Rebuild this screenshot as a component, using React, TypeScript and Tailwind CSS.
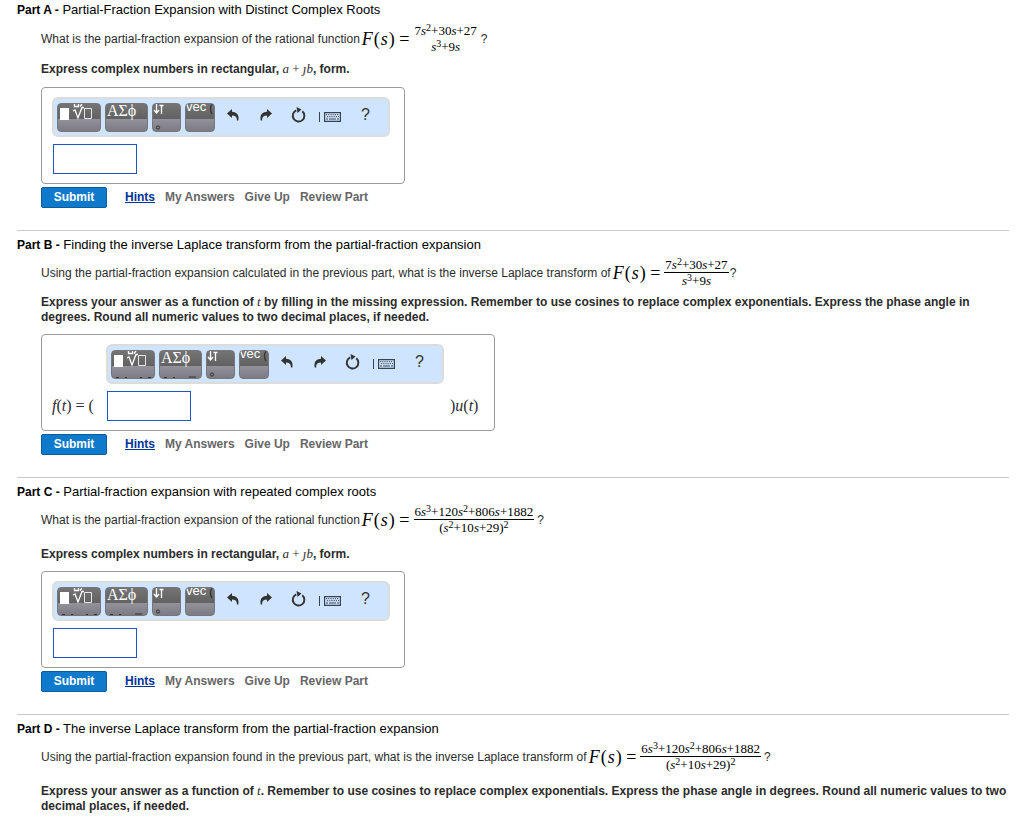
import type { ReactNode } from "react";

const SERIF = "font-['Liberation_Serif',serif]";

function Term({ children }: { children: ReactNode }) {
  return <span className="font-['Liberation_Serif',serif] text-[13px] leading-none font-normal">{children}</span>;
}

function Sup({ children }: { children: ReactNode }) {
  return <sup className="relative -top-1 align-baseline text-[10px] leading-none">{children}</sup>;
}

function Formula({ top, bottom, bar = true }: { top: ReactNode; bottom: ReactNode; bar?: boolean }) {
  return (
    <span className={`${SERIF} ml-[2px] inline-flex items-center text-black`}>
      <span className="text-[18px] leading-6">
        <i className="pr-px">F</i>(<i className="px-px">s</i>) =
      </span>
      <span className="ml-1 inline-flex flex-col items-stretch text-center text-[13px]">
        <span className={bar ? "border-b border-black px-px leading-[14px]" : "border-b border-transparent px-px leading-[14px]"}>{top}</span>
        <span className="leading-[15px]">{bottom}</span>
      </span>
    </span>
  );
}

const cubicTop = (
  <>
    6<i>s</i><Sup>3</Sup>+120<i>s</i><Sup>2</Sup>+806<i>s</i>+1882
  </>
);
const cubicBottom = (
  <>
    (<i>s</i><Sup>2</Sup>+10<i>s</i>+29)<Sup>2</Sup>
  </>
);
const quadTop = (
  <>
    7<i>s</i><Sup>2</Sup>+30<i>s</i>+27
  </>
);
const quadBottom = (
  <>
    <i>s</i><Sup>3</Sup>+9<i>s</i>
  </>
);

const KEY =
  "relative flex h-[29px] shrink-0 flex-col items-start justify-start overflow-hidden rounded-[4px] border border-[#77777b] bg-[linear-gradient(#747474,#626262_54%,#94929a_55%,#7c7a82)] text-left text-white";
const TOOL = "flex h-6 w-[33px] items-center justify-center text-[#333]";

function Toolbar({ marks }: { marks?: boolean }) {
  return (
    <div className="flex h-10 w-[338px] items-start rounded-md border-2 border-[#dcdcdc] bg-[#cfe5ff] pt-1 pl-[3px]">
      <div className="flex gap-1">
        <button type="button" aria-label="Templates" className={`${KEY} w-[44px]`}>
          <svg className="block" width="42" height="27" viewBox="0 0 42 27" fill="none">
            <path d="M2 4h9v12H2z" fill="#fff" />
            <path d="M16.500 0v2.500h4V0M22 2.500l2-2.500M15 7l2-1 3 8L24 3.500h2" stroke="#fff" strokeWidth="1.300" />
            <path d="M26.500 4.500h7v10h-7z" stroke="#e6e6e6" />
            {marks && <path d="M4 26.500h3M13 26.500h2M28 26.500h2M36 26.500h3" stroke="#333" />}
          </svg>
        </button>
        <button type="button" aria-label="Greek symbols" className={`${KEY} w-[43px]`}>
          <span className={`${SERIF} -mt-px block pl-px text-[16px] leading-[15px]`}>ΑΣϕ</span>
          {marks && (
            <svg className="block" width="41" height="13" viewBox="0 0 41 13">
              <path d="M4 12.500h3M13 12.500h2M29 12h7" stroke="#333" />
            </svg>
          )}
        </button>
        <button type="button" aria-label="Arrows and operators" className={`${KEY} w-[29px]`}>
          <svg className="block" width="27" height="27" viewBox="0 0 27 27" fill="none">
            <path d="M3.500 0v8.500M1 6l2.500 3 2.500-3M8.500 10V1M6.500 1.500h4" stroke="#fff" strokeWidth="1.300" />
            <circle cx="5" cy="23.500" r="1.600" stroke="#333" />
          </svg>
        </button>
        <button type="button" aria-label="Vectors" className={`${KEY} w-[30px]`}>
          <span className="-mt-1 block text-[13px] leading-[14px]">vec</span>
          <svg className="absolute top-0 right-0" width="6" height="27" viewBox="0 0 6 27" fill="none">
            <path d="M4 0q-3 5 0 10" stroke="#333" strokeWidth="1.300" />
          </svg>
        </button>
      </div>
      <div className="ml-px flex flex-1 items-start">
        <button type="button" aria-label="Undo" className={TOOL}>
          <svg width="12" height="12" viewBox="0 0 12 12" fill="currentColor">
            <path d="M0 4.500 5 0v2.700c4.500.1 7.500 3 6.300 8.800h-1.500c.5-3-1.300-5-4.800-5v2.500z" />
          </svg>
        </button>
        <button type="button" aria-label="Redo" className={TOOL}>
          <svg width="12" height="12" viewBox="0 0 12 12" fill="currentColor">
            <path d="M12 4.500 7 0v2.700C2.500 2.800-.5 5.700.7 11.500h1.500c-.5-3 1.300-5 4.800-5v2.500z" />
          </svg>
        </button>
        <button type="button" aria-label="Reset" className={TOOL}>
          <svg width="15" height="16" viewBox="0 0 15 16" fill="none">
            <path d="M11.300 4.300a5.800 5.800 0 1 1-6-.9" stroke="currentColor" strokeWidth="1.900" />
            <path d="M5.500 0 10.500 2.500 6.500 6z" fill="currentColor" />
          </svg>
        </button>
        <button type="button" aria-label="Keyboard shortcuts" className="flex h-6 w-7 items-center justify-center pt-1 text-[#37424f]">
          <svg width="23" height="12" viewBox="0 0 23 12" fill="none">
            <path d="M1.500 1v10" stroke="currentColor" />
            <path d="M6.600 1.600h15.800v8.800H6.600z" stroke="currentColor" strokeWidth="1.200" />
            <path d="M8 3.700h13M9 5.700h12" stroke="currentColor" strokeDasharray="1.200 1" />
            <path d="M8 8h2M11 8h7M19 8h2" stroke="currentColor" />
          </svg>
        </button>
        <button type="button" aria-label="Help" className="flex h-6 flex-1 items-center justify-center text-[16px] text-[#333]">
          ?
        </button>
      </div>
    </div>
  );
}

function Answer({ label }: { label: string }) {
  return <input type="text" aria-label={label} className="block h-[30px] w-[84px] border border-[#1f56c4] bg-white px-1 outline-none" />;
}

function Box({ children }: { children: ReactNode }) {
  return <div className="w-fit rounded border border-[#9b9b9b] py-[9px] pr-[14px] pl-[10px]">{children}</div>;
}

function Actions() {
  const link = "text-[#666]";
  return (
    <div className="mt-[3px] flex items-center gap-[10px] text-[12px] leading-[21px] font-bold">
      <button type="button" className="mr-2 h-[21px] w-[66px] rounded-[2px] border border-[#0b5c9c] bg-[#0f7acb] leading-[19px] text-white">
        Submit
      </button>
      <a href="#hints" className="text-[#003399] underline">Hints</a>
      <a href="#answers" className={link}>My Answers</a>
      <a href="#give-up" className={link}>Give Up</a>
      <a href="#review" className={link}>Review Part</a>
    </div>
  );
}

function Part({ name, title, first, children }: { name: string; title: string; first?: boolean; children: ReactNode }) {
  return (
    <section className={first ? "" : "mt-[22px] border-t border-[#c8c8c8] pt-1"}>
      <h2 className="text-[13px] leading-5 text-black">
        <b className="text-[12px]">{name} -</b> {title}
      </h2>
      <div className="pl-6">{children}</div>
    </section>
  );
}

const Q = "flex h-9 items-center text-[12px] whitespace-nowrap";
const I = "text-[12px] leading-[15px] font-bold";

export default function App() {
  return (
    <main className="overflow-hidden bg-white pr-[15px] pl-[17px] font-['Liberation_Sans',Arial,sans-serif] text-[#2b2b2b]">
      <Part name="Part A" title="Partial-Fraction Expansion with Distinct Complex Roots" first>
        <p className={`${Q} mt-px`}>
          What is the partial-fraction expansion of the rational function
          <Formula top={quadTop} bottom={quadBottom} bar={false} />
          <span className="ml-[3px]">?</span>
        </p>
        <p className={`${I} mt-[5px] mb-[10px]`}>
          Express complex numbers in rectangular, <Term><i>a</i> + <i>ȷb</i></Term>, form.
        </p>
        <Box>
          <Toolbar />
          <div className="mt-[7px] pl-px"><Answer label="Expansion of F(s)" /></div>
        </Box>
        <Actions />
      </Part>

      <Part name="Part B" title="Finding the inverse Laplace transform from the partial-fraction expansion">
        <p className={Q}>
          Using the partial-fraction expansion calculated in the previous part, what is the inverse Laplace transform of
          <Formula top={quadTop} bottom={quadBottom} />
          <span className="ml-px">?</span>
        </p>
        <p className={`${I} mt-1 mb-[9px]`}>
          Express your answer as a function of <Term><i>t</i></Term> by filling in the missing expression. Remember to use cosines to replace complex exponentials. Express the phase angle in degrees. Round all numeric values to two decimal places, if needed.
        </p>
        <Box>
          <div className="grid grid-cols-[54px_344px_auto] items-center gap-y-[7px]">
            <div className="col-start-2"><Toolbar marks /></div>
            <span className={`${SERIF} col-start-1 text-[16px] leading-6`}><i>f</i>(<i>t</i>) = (</span>
            <div className="pl-px"><Answer label="Expression for f(t)" /></div>
            <span className={`${SERIF} pr-[2px] text-[16px] leading-6`}>)<i>u</i>(<i>t</i>)</span>
          </div>
        </Box>
        <Actions />
      </Part>

      <Part name="Part C" title="Partial-fraction expansion with repeated complex roots">
        <p className={Q}>
          What is the partial-fraction expansion of the rational function
          <Formula top={cubicTop} bottom={cubicBottom} />
          <span className="ml-[3px]">?</span>
        </p>
        <p className={`${I} mt-[9px] mb-[9px]`}>
          Express complex numbers in rectangular, <Term><i>a</i> + <i>ȷb</i></Term>, form.
        </p>
        <Box>
          <Toolbar marks />
          <div className="mt-[7px] pl-px"><Answer label="Expansion with repeated roots" /></div>
        </Box>
        <Actions />
      </Part>

      <Part name="Part D" title="The inverse Laplace transform from the partial-fraction expansion">
        <p className={Q}>
          Using the partial-fraction expansion found in the previous part, what is the inverse Laplace transform of
          <Formula top={cubicTop} bottom={cubicBottom} />
          <span className="ml-[3px]">?</span>
        </p>
        <p className={`${I} mt-[9px]`}>
          Express your answer as a function of <Term><i>t</i></Term>. Remember to use cosines to replace complex exponentials. Express the phase angle in degrees. Round all numeric values to two decimal places, if needed.
        </p>
      </Part>
    </main>
  );
}
